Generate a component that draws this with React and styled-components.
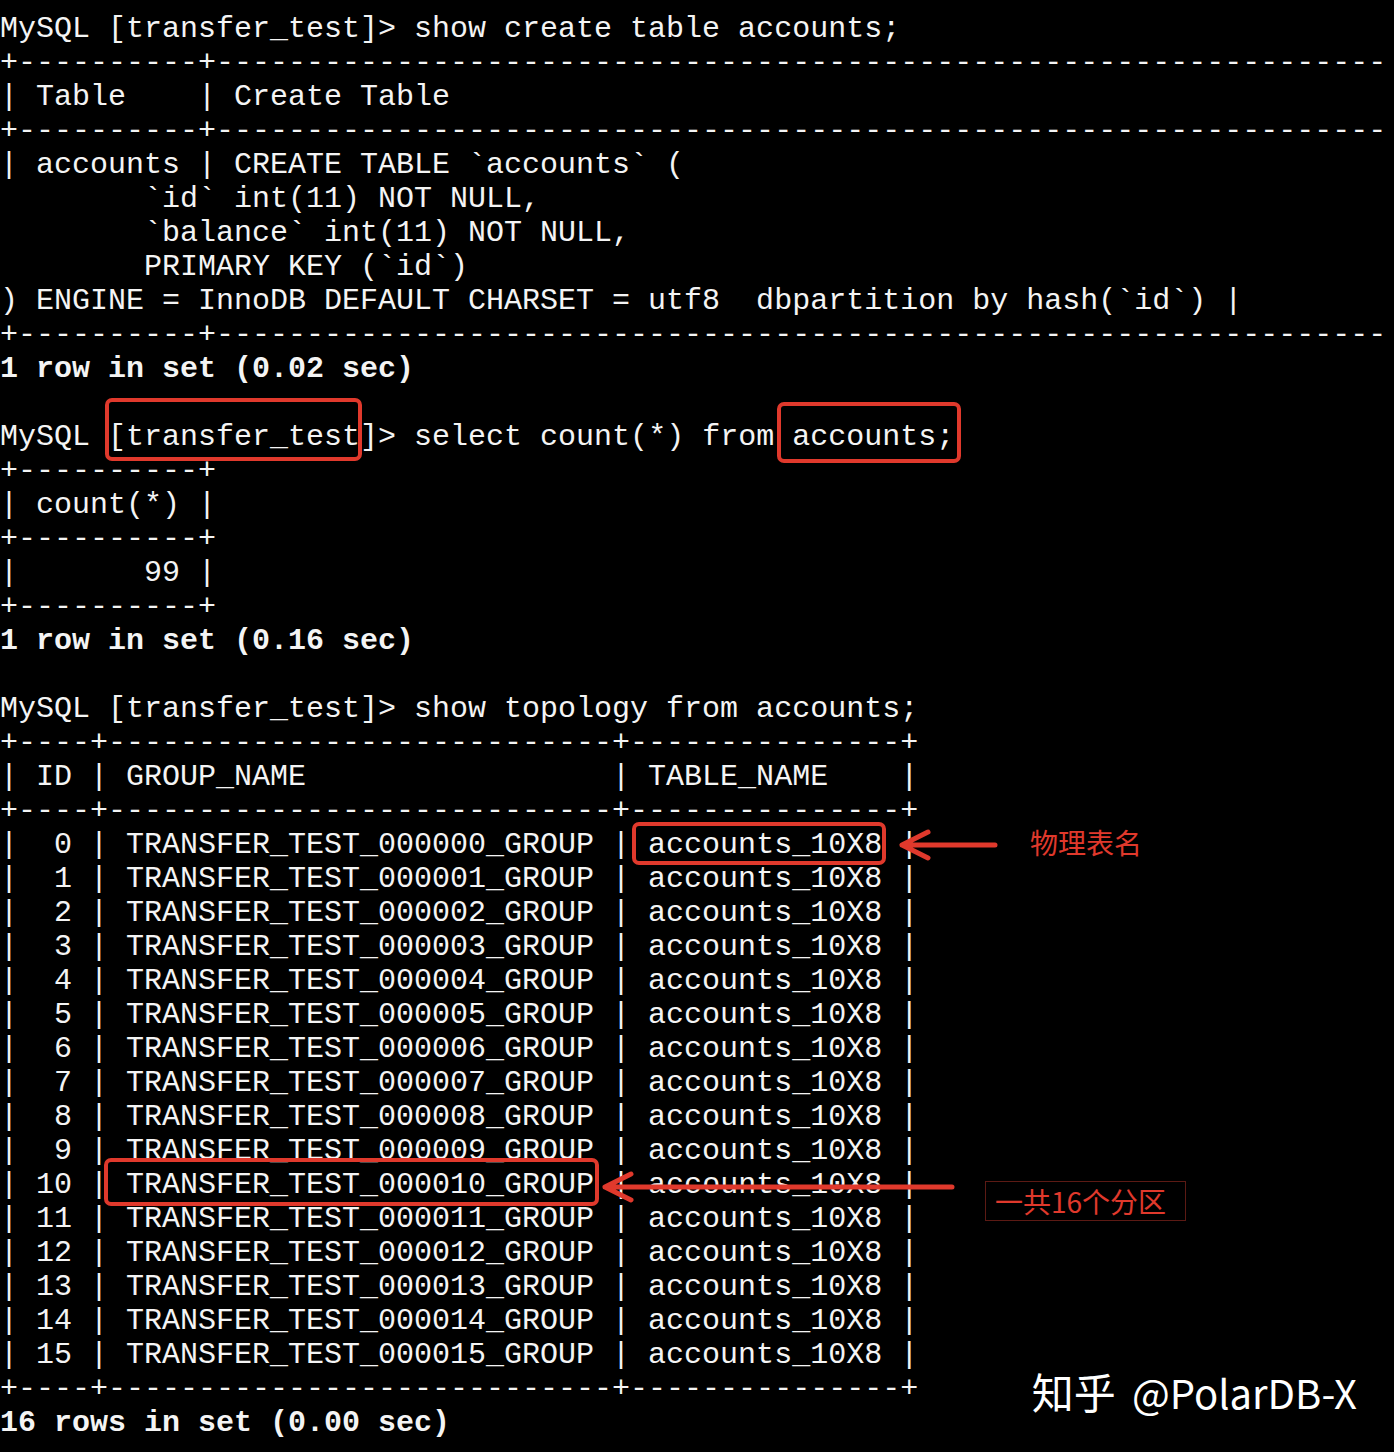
import React from "react";
import styled, { createGlobalStyle } from "styled-components";

const LH = 34;
const TOP = 12;
const RED = "#e0392c";

const GlobalStyle = createGlobalStyle`
  html, body {
    margin: 0;
    padding: 0;
    background: #000;
  }
`;

const Screen = styled.div`
  position: relative;
  width: 1394px;
  height: 1452px;
  overflow: hidden;
  background: #000;
`;

const Terminal = styled.div`
  padding-top: ${TOP}px;
  font-family: "Liberation Mono", "DejaVu Sans Mono", monospace;
  font-size: 30px;
  line-height: ${LH}px;
  color: #f4f4f4;
  white-space: pre;
`;

const Line = styled.div`
  height: ${LH}px;
  font-weight: ${(p) => (p.$bold ? 700 : 400)};
`;

const Highlight = styled.span`
  position: relative;
  display: inline-block;

  &::after {
    content: "";
    position: absolute;
    left: ${(p) => p.$l}px;
    right: ${(p) => p.$r}px;
    top: ${(p) => p.$t}px;
    bottom: ${(p) => p.$b}px;
    border: 4px solid ${RED};
    border-radius: 7px;
  }
`;

const Callout = styled.div`
  position: absolute;
  left: ${(p) => p.$x}px;
  top: ${(p) => p.$y}px;
  font-family: "Noto Sans CJK SC", "Noto Sans", sans-serif;
  font-size: 28px;
  line-height: 38px;
  color: ${RED};
  white-space: nowrap;
`;

const BoxedCallout = styled(Callout)`
  padding: 0 19px 0 9px;
  border: 1.5px solid #5c1a14;
`;

const ArrowSvg = styled.svg`
  position: absolute;
  left: ${(p) => p.$x}px;
  top: ${(p) => p.$y}px;
  overflow: visible;
`;

const Watermark = styled.div`
  position: absolute;
  right: 37px;
  top: 1363px;
  display: flex;
  align-items: baseline;
  gap: 16px;
  font-family: "Noto Sans CJK SC", "Noto Sans", sans-serif;
  line-height: 56px;
  color: #fff;
  white-space: nowrap;
`;

const Brand = styled.span`
  font-size: 42px;
`;

const Handle = styled.span`
  font-size: 40px;
`;

function Arrow({ x, y, length }) {
  return (
    <ArrowSvg $x={x} $y={y} width={length} height={32} viewBox={`0 0 ${length} 32`}>
      <path
        d={`M4 16 L${length - 3} 16 M30 3 L4 16 L30 29`}
        fill="none"
        stroke={RED}
        strokeWidth="5"
        strokeLinecap="round"
        strokeLinejoin="round"
      />
    </ArrowSvg>
  );
}

const dash = (n) => "-".repeat(n);
const createSep = "+" + dash(10) + "+" + dash(65);
const countSep = "+" + dash(10) + "+";
const topoSep = "+" + dash(4) + "+" + dash(28) + "+" + dash(15) + "+";
const groupName = (id) => `TRANSFER_TEST_${String(id).padStart(6, "0")}_GROUP`;
const ids = Array.from({ length: 16 }, (_, i) => i);

function TopoRow({ id }) {
  const head = `|${String(id).padStart(3)} | `;
  const group = groupName(id);
  const table = "accounts_10X8";
  if (id === 0) {
    return (
      <Line>
        {`${head}${group} | `}
        <Highlight $l={-16} $r={-4} $t={-6} $b={-3}>{table}</Highlight>
        {" |"}
      </Line>
    );
  }
  if (id === 10) {
    return (
      <Line>
        {head}
        <Highlight $l={-22} $r={-5} $t={-10} $b={-4}>{group}</Highlight>
        {` | ${table} |`}
      </Line>
    );
  }
  return <Line>{`${head}${group} | ${table} |`}</Line>;
}

export default function App() {
  return (
    <Screen>
      <GlobalStyle />
      <Terminal>
        <Line>MySQL [transfer_test]&gt; show create table accounts;</Line>
        <Line>{createSep}</Line>
        <Line>{"| " + "Table".padEnd(9) + "| Create Table"}</Line>
        <Line>{createSep}</Line>
        <Line>{"| accounts | CREATE TABLE `accounts` ("}</Line>
        <Line>{"        `id` int(11) NOT NULL,"}</Line>
        <Line>{"        `balance` int(11) NOT NULL,"}</Line>
        <Line>{"        PRIMARY KEY (`id`)"}</Line>
        <Line>{") ENGINE = InnoDB DEFAULT CHARSET = utf8  dbpartition by hash(`id`) |"}</Line>
        <Line>{createSep}</Line>
        <Line $bold>1 row in set (0.02 sec)</Line>
        <Line />
        <Line>
          {"MySQL "}
          <Highlight $l={-3} $r={-2} $t={-22} $b={-7}>[transfer_test</Highlight>
          {"]> select count(*) from "}
          <Highlight $l={-15} $r={-7} $t={-18} $b={-9}>accounts;</Highlight>
        </Line>
        <Line>{countSep}</Line>
        <Line>| count(*) |</Line>
        <Line>{countSep}</Line>
        <Line>{"|       99 |"}</Line>
        <Line>{countSep}</Line>
        <Line $bold>1 row in set (0.16 sec)</Line>
        <Line />
        <Line>MySQL [transfer_test]&gt; show topology from accounts;</Line>
        <Line>{topoSep}</Line>
        <Line>{`| ID | ${"GROUP_NAME".padEnd(27)}| ${"TABLE_NAME".padEnd(14)}|`}</Line>
        <Line>{topoSep}</Line>
        {ids.map((id) => (
          <TopoRow key={id} id={id} />
        ))}
        <Line>{topoSep}</Line>
        <Line $bold>16 rows in set (0.00 sec)</Line>
      </Terminal>

      <Arrow x={898} y={TOP + 24 * LH + 1} length={100} />
      <Callout $x={1030} $y={TOP + 24 * LH - 5}>物理表名</Callout>

      <Arrow x={601} y={TOP + 34 * LH + 3} length={354} />
      <BoxedCallout $x={985} $y={1181}>一共16个分区</BoxedCallout>

      <Watermark>
        <Brand>知乎</Brand>
        <Handle>@PolarDB-X</Handle>
      </Watermark>
    </Screen>
  );
}
